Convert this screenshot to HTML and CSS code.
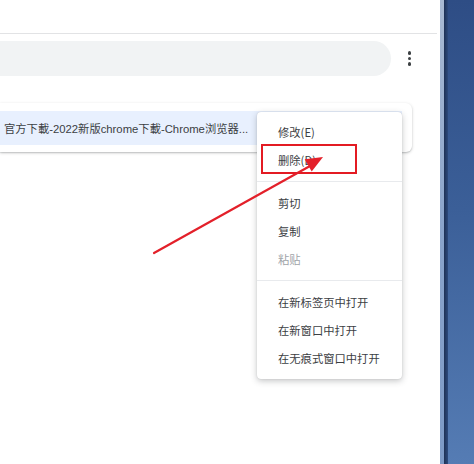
FILE: index.html
```html
<!DOCTYPE html>
<html lang="zh-CN">
<head>
<meta charset="utf-8">
<title>书签</title>
<link rel="stylesheet" href="styles.css">
</head>
<body>
<div class="screen">
  <div class="page">
    <div class="topbar"></div>
    <div class="toolbar">
      <div class="search"></div>
      <div class="kebab"><span></span><span></span><span></span></div>
    </div>
    <div class="card">
      <div class="row">官方下載-2022新版chrome下載-Chrome浏览器...</div>
    </div>
  </div>
  <div class="desk">
    <div class="edge"></div>
    <div class="shade"></div>
    <div class="blue"></div>
  </div>

  <div class="menu">
    <div class="item">修改(E)</div>
    <div class="item">删除(D)</div>
    <div class="sep"></div>
    <div class="item">剪切</div>
    <div class="item">复制</div>
    <div class="item disabled">粘贴</div>
    <div class="sep"></div>
    <div class="item">在新标签页中打开</div>
    <div class="item">在新窗口中打开</div>
    <div class="item">在无痕式窗口中打开</div>
  </div>

  <div class="highlight"></div>
  <svg class="arrow" width="474" height="464" viewBox="0 0 474 464">
    <line x1="154" y1="253" x2="310" y2="166" stroke="#e3202a" stroke-width="2.2" stroke-linecap="round"/>
    <polygon points="323,157 311.7,171.5 304.7,159.3" fill="#e3202a"/>
  </svg>
</div>
</body>
</html>
```
FILE: styles.css
```css
html, body {
  margin: 0;
  padding: 0;
  background: #fff;
}

body {
  font-family: "Liberation Sans", "Noto Sans CJK SC", sans-serif;
  font-size: 11.3px;
  color: #3c4043;
}

.screen {
  position: relative;
  display: flex;
  width: 474px;
  height: 464px;
  overflow: hidden;
}

.page {
  width: 440px;
  flex: none;
  background: #fff;
  display: flex;
  flex-direction: column;
}

.topbar {
  height: 33px;
  border-bottom: 1px solid #e2e3e5;
  margin-right: 3px;
}

.toolbar {
  display: flex;
  align-items: center;
  margin-top: 7px;
  height: 35px;
}

.search {
  width: 391px;
  height: 35px;
  background: #f1f3f4;
  border-radius: 0 18px 18px 0;
}

.kebab {
  margin-left: 17px;
  display: flex;
  flex-direction: column;
  gap: 2px;
  width: 4px;
}

.kebab span {
  width: 3.4px;
  height: 3.4px;
  border-radius: 50%;
  background: #3c4043;
}

.card {
  margin-top: 27px;
  width: 412px;
  height: 49px;
  box-sizing: border-box;
  padding: 8px 10px 0 0;
  background: #fff;
  border-radius: 0 6px 6px 0;
  box-shadow: 0 1px 3px rgba(60, 64, 67, 0.28), 0 1px 1px rgba(60, 64, 67, 0.12);
}

.row {
  height: 34px;
  display: flex;
  align-items: center;
  padding-left: 4px;
  background: #e8f0fe;
  color: #3c4043;
  white-space: nowrap;
}

.desk {
  flex: 1;
  display: flex;
}

.edge {
  width: 4px;
  background: linear-gradient(#a9bad3, #8aa4cb 50%, #7d9ac6);
}

.shade {
  width: 4px;
  background: linear-gradient(to right, #1e3155, #2d4a7c);
}

.blue {
  flex: 1;
  background: linear-gradient(#2e4d85, #3b5f98 45%, #557cb4);
}

.menu {
  position: absolute;
  left: 257px;
  top: 112px;
  width: 145px;
  box-sizing: border-box;
  padding: 6px 0 7px;
  background: #fff;
  border-radius: 4px;
  box-shadow: 0 2px 6px rgba(60, 64, 67, 0.3), 0 0 1px rgba(60, 64, 67, 0.25);
  font-family: "Noto Sans CJK SC", "Liberation Sans", sans-serif;
  font-size: 11.3px;
  color: #3c4043;
}

.item {
  height: 28px;
  display: flex;
  align-items: center;
  padding-left: 21px;
}

.item.disabled {
  color: #a0a4a8;
}

.sep {
  height: 1px;
  margin: 7px 0;
  background: #e8eaed;
}

.highlight {
  position: absolute;
  left: 261px;
  top: 144px;
  width: 96px;
  height: 30px;
  box-sizing: border-box;
  border: 2.5px solid #e31b23;
}

.arrow {
  position: absolute;
  left: 0;
  top: 0;
  pointer-events: none;
}
```
